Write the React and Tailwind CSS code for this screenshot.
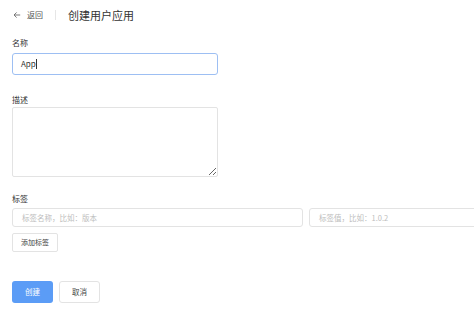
import React from "react";

export default function App() {
  return (
    <div
      className="w-[474px] h-[319px] overflow-hidden bg-white px-[12px] text-[#333]"
      style={{ fontFamily: '"Noto Sans CJK SC", "Noto Sans", sans-serif' }}
    >
      {/* header */}
      <div className="flex items-center h-[30px]">
        <div className="flex items-center text-[#555]">
          <svg width="8" height="8" viewBox="0 0 10 10" fill="none" stroke="#666" strokeWidth="1.1" className="ml-[1px]">
            <path d="M9 5H1.5M4.5 1.8L1.3 5l3.2 3.2" />
          </svg>
          <span className="ml-[6px] text-[8px] leading-[10px]">返回</span>
        </div>
        <div className="mx-[12px] w-px h-[10px] bg-[#e6e6e6]" />
        <div className="text-[11px] leading-[14px] text-[#333]">创建用户应用</div>
      </div>

      {/* name */}
      <div className="mt-[8px] text-[8px] leading-[10px] text-[#333]">名称</div>
      <div className="mt-[5px] w-[206px] h-[22px] rounded-[3px] border border-[#9dbff3] flex items-center px-[8px] text-[8px] text-[#333]">
        <span>App</span>
        <span className="inline-block w-px h-[10px] bg-[#333]" />
      </div>

      {/* description */}
      <div className="mt-[20px] text-[8px] leading-[10px] text-[#333]">描述</div>
      <textarea
        className="block mt-[2px] w-[206px] h-[70px] rounded-[2px] border border-[#e3e3e3] outline-none"
        readOnly
      />

      {/* tags */}
      <div className="mt-[17px] text-[8px] leading-[10px] text-[#333]">标签</div>
      <div className="mt-[4px] flex gap-[6px]">
        <div className="w-[291px] shrink-0 h-[19px] rounded-[3px] border border-[#e3e3e3] flex items-center px-[9px] text-[7.5px] text-[#bdbdbd]">
          标签名称，比如：版本
        </div>
        <div className="w-[291px] shrink-0 h-[19px] rounded-[3px] border border-[#e3e3e3] flex items-center px-[9px] text-[7.5px] text-[#bdbdbd]">
          标签值，比如：1.0.2
        </div>
      </div>
      <div className="mt-[6px] w-[46px] h-[19px] rounded-[2px] border border-[#e3e3e3] flex items-center justify-center text-[7px] text-[#444]">
        添加标签
      </div>

      {/* actions */}
      <div className="mt-[29px] flex gap-[6px]">
        <div className="w-[41px] h-[22px] rounded-[3px] bg-[#5b9cf6] flex items-center justify-center text-[7.5px] text-white">
          创建
        </div>
        <div className="w-[41px] h-[22px] rounded-[3px] border border-[#e3e3e3] flex items-center justify-center text-[7.5px] text-[#444]">
          取消
        </div>
      </div>
    </div>
  );
}
